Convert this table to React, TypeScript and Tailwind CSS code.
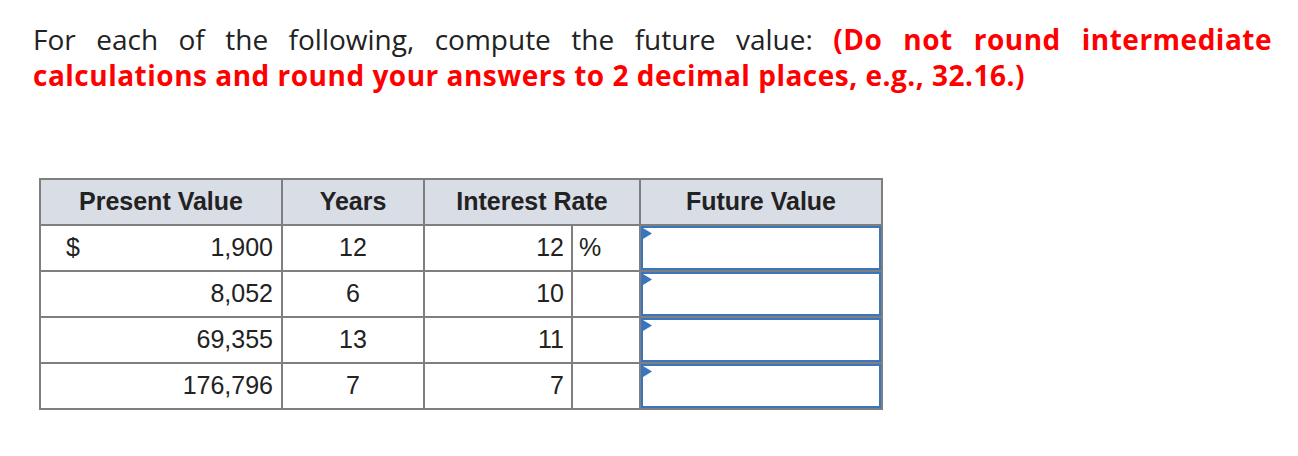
import * as React from "react";

const rows = [
  { pv: "1,900", years: "12", rate: "12", first: true },
  { pv: "8,052", years: "6", rate: "10", first: false },
  { pv: "69,355", years: "13", rate: "11", first: false },
  { pv: "176,796", years: "7", rate: "7", first: false },
];

function AnswerBox() {
  return (
    <div className="relative h-[44px] border-2 border-[#3a75bd] bg-white">
      <svg
        className="absolute left-0 top-0"
        width="9"
        height="11"
        viewBox="0 0 9 11"
      >
        <polygon points="0,0 9,5.5 0,11" fill="#3a75bd" />
      </svg>
    </div>
  );
}

export default function App() {
  return (
    <div className="w-[1298px] h-[456px] bg-white pl-[33px] pr-[26px] pt-[21px]">
      <p
        className="text-justify text-[28px] leading-[36px] text-[#222]"
        style={{ fontFamily: "'Open Sans', Lato, sans-serif" }}
      >
        For each of the following, compute the future value:{" "}
        <strong className="font-bold tracking-[0.5px] text-[#ff0000]">
          (Do not round intermediate calculations and round your answers to 2
          decimal places, e.g., 32.16.)
        </strong>
      </p>

      <table
        className="mt-[85px] ml-[6px] table-fixed border-collapse text-[25px] text-[#222]"
        style={{ fontFamily: "'Liberation Sans', Arial, sans-serif" }}
      >
        <colgroup>
          <col className="w-[242px]" />
          <col className="w-[142px]" />
          <col className="w-[148px]" />
          <col className="w-[68px]" />
          <col className="w-[242px]" />
        </colgroup>
        <thead>
          <tr className="h-[46px] bg-[#d9dde6]">
            <th className="border-2 border-[#7f7f7f] font-bold">Present Value</th>
            <th className="border-2 border-[#7f7f7f] font-bold">Years</th>
            <th colSpan={2} className="border-2 border-[#7f7f7f] font-bold">
              Interest Rate
            </th>
            <th className="border-2 border-[#7f7f7f] font-bold">Future Value</th>
          </tr>
        </thead>
        <tbody>
          {rows.map((r) => (
            <tr key={r.pv} className="h-[46px]">
              <td className="border-2 border-[#7f7f7f] pl-[25px] pr-[8px]">
                <div className="flex justify-between">
                  <span>{r.first ? "$" : ""}</span>
                  <span>{r.pv}</span>
                </div>
              </td>
              <td className="border-2 border-[#7f7f7f] text-center">{r.years}</td>
              <td className="border-2 border-[#7f7f7f] pr-[7px] text-right">
                {r.rate}
              </td>
              <td className="border-2 border-[#7f7f7f] pl-[6px]">
                {r.first ? "%" : ""}
              </td>
              <td className="border-2 border-[#7f7f7f] p-0">
                <AnswerBox />
              </td>
            </tr>
          ))}
        </tbody>
      </table>
    </div>
  );
}
